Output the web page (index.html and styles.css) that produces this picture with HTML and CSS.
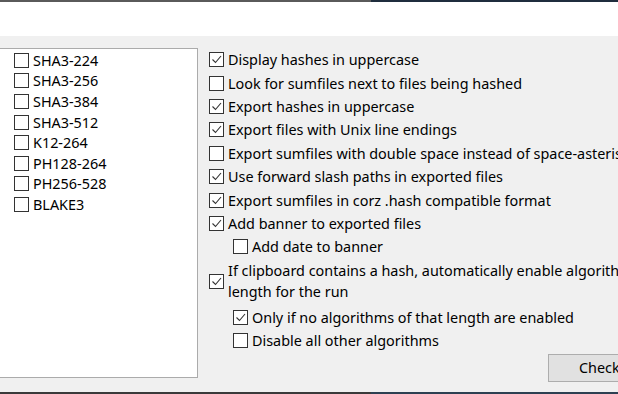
FILE: index.html
```html
<!DOCTYPE html>
<html>
<head>
<meta charset="utf-8">
<link rel="stylesheet" href="styles.css">
</head>
<body>
<div class="frame">
  <div class="edge top"><span class="edge-left"></span><span class="edge-right"></span></div>
  <div class="header"></div>
  <div class="main">
    <div class="list">
      <div class="item"><span class="box"></span><span>SHA3-224</span></div>
      <div class="item"><span class="box"></span><span>SHA3-256</span></div>
      <div class="item"><span class="box"></span><span>SHA3-384</span></div>
      <div class="item"><span class="box"></span><span>SHA3-512</span></div>
      <div class="item"><span class="box"></span><span>K12-264</span></div>
      <div class="item"><span class="box"></span><span>PH128-264</span></div>
      <div class="item"><span class="box"></span><span>PH256-528</span></div>
      <div class="item"><span class="box"></span><span>BLAKE3</span></div>
    </div>
    <div class="options">
      <div class="opt"><span class="box"><svg viewBox="0 0 13 13"><path d="M2.5 6.5 L5.5 9.5 L11 3"/></svg></span><span>Display hashes in uppercase</span></div>
      <div class="opt"><span class="box"></span><span>Look for sumfiles next to files being hashed</span></div>
      <div class="opt"><span class="box"><svg viewBox="0 0 13 13"><path d="M2.5 6.5 L5.5 9.5 L11 3"/></svg></span><span>Export hashes in uppercase</span></div>
      <div class="opt"><span class="box"><svg viewBox="0 0 13 13"><path d="M2.5 6.5 L5.5 9.5 L11 3"/></svg></span><span>Export files with Unix line endings</span></div>
      <div class="opt"><span class="box"></span><span>Export sumfiles with double space instead of space-asterisk</span></div>
      <div class="opt"><span class="box"><svg viewBox="0 0 13 13"><path d="M2.5 6.5 L5.5 9.5 L11 3"/></svg></span><span>Use forward slash paths in exported files</span></div>
      <div class="opt"><span class="box"><svg viewBox="0 0 13 13"><path d="M2.5 6.5 L5.5 9.5 L11 3"/></svg></span><span>Export sumfiles in corz .hash compatible format</span></div>
      <div class="opt"><span class="box"><svg viewBox="0 0 13 13"><path d="M2.5 6.5 L5.5 9.5 L11 3"/></svg></span><span>Add banner to exported files</span></div>
      <div class="opt sub"><span class="box"></span><span>Add date to banner</span></div>
      <div class="opt multi"><span class="box"><svg viewBox="0 0 13 13"><path d="M2.5 6.5 L5.5 9.5 L11 3"/></svg></span><span>If clipboard contains a hash, automatically enable algorithms of that<br>length for the run</span></div>
      <div class="opt sub"><span class="box"><svg viewBox="0 0 13 13"><path d="M2.5 6.5 L5.5 9.5 L11 3"/></svg></span><span>Only if no algorithms of that length are enabled</span></div>
      <div class="opt sub"><span class="box"></span><span>Disable all other algorithms</span></div>
      <div class="actions"><button class="btn">Check for updates</button></div>
    </div>
  </div>
  <div class="edge bottom"><span class="edge-left"></span><span class="edge-right"></span></div>
</div>
</body>
</html>
```
FILE: styles.css
```css
html, body {
  margin: 0;
  padding: 0;
  overflow: hidden;
}
body {
  width: 618px;
  height: 394px;
  font-family: "Noto Sans", "Open Sans", sans-serif;
  font-size: 14.4px;
  color: #000;
}
.frame {
  width: 618px;
  height: 394px;
  display: flex;
  flex-direction: column;
  overflow: hidden;
}
.edge {
  height: 2px;
  display: flex;
  flex: none;
}
.edge-left { width: 371px; background: #5a5a5a; }
.edge-right { flex: 1; background: #1f2d3d; }
.edge.bottom .edge-left { background: #3a3a3a; }
.edge.bottom .edge-right { background: #2d4052; }
.header {
  height: 34px;
  flex: none;
  background: #fff;
}
.main {
  flex: 1;
  background: #f0f0f0;
  display: flex;
  align-items: flex-start;
  padding-top: 12px;
  white-space: nowrap;
}
.list {
  width: 197px;
  height: 327px;
  margin-left: -1px;
  background: #fff;
  border: 1px solid #ababab;
  padding-top: 1px;
  box-sizing: content-box;
  flex: none;
}
.item {
  height: 20.6px;
  display: flex;
  align-items: center;
  padding-left: 14px;
}
.box {
  width: 13px;
  height: 13px;
  border: 1px solid #333;
  background: #fff;
  flex: none;
  margin-right: 4px;
  display: flex;
}
.box svg {
  width: 13px;
  height: 13px;
}
.box path {
  fill: none;
  stroke: #333;
  stroke-width: 1.1;
}
.options {
  margin-left: 11px;
  display: flex;
  flex-direction: column;
}
.opt {
  height: 23.4px;
  display: flex;
  align-items: center;
}
.opt.sub {
  padding-left: 24px;
}
.opt.multi {
  height: auto;
  line-height: 21px;
  padding-top: 1.6px;
  padding-bottom: 3.8px;
}
.actions {
  padding-left: 339px;
  padding-top: 1px;
}
.btn {
  font: inherit;
  color: #000;
  height: 28px;
  padding: 0 30px;
  background: #e1e1e1;
  border: 1px solid #adadad;
  margin: 0;
  white-space: nowrap;
}
```
